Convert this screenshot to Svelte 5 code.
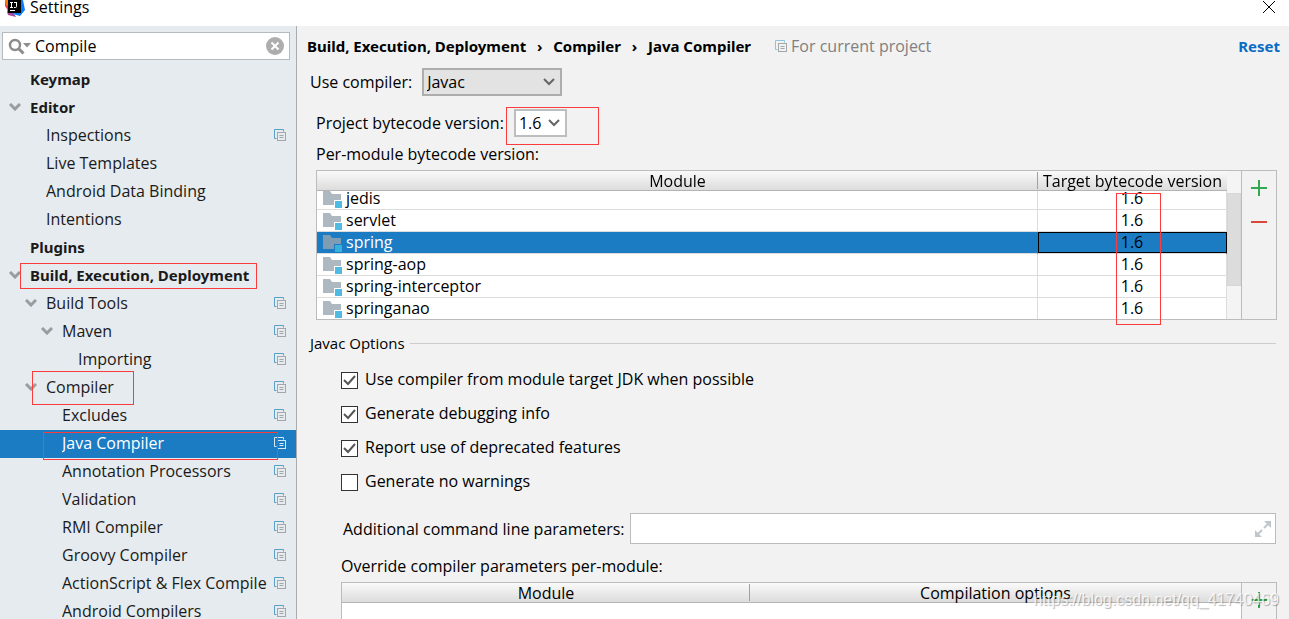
<script lang="ts">
  import { onMount } from 'svelte';

  type TreeItem = {
    label: string;
    level: number;
    bold?: boolean;
    open?: boolean;
    project?: boolean;
    mark?: string;
  };

  const tree: TreeItem[] = [
    { label: 'Keymap', level: 0, bold: true },
    { label: 'Editor', level: 0, bold: true, open: true },
    { label: 'Inspections', level: 1, project: true },
    { label: 'Live Templates', level: 1 },
    { label: 'Android Data Binding', level: 1 },
    { label: 'Intentions', level: 1 },
    { label: 'Plugins', level: 0, bold: true },
    { label: 'Build, Execution, Deployment', level: 0, bold: true, open: true, mark: 'build' },
    { label: 'Build Tools', level: 1, open: true, project: true },
    { label: 'Maven', level: 2, open: true, project: true },
    { label: 'Importing', level: 3, project: true },
    { label: 'Compiler', level: 1, open: true, project: true, mark: 'compiler' },
    { label: 'Excludes', level: 2, project: true },
    { label: 'Java Compiler', level: 2, project: true, mark: 'java' },
    { label: 'Annotation Processors', level: 2, project: true },
    { label: 'Validation', level: 2, project: true },
    { label: 'RMI Compiler', level: 2, project: true },
    { label: 'Groovy Compiler', level: 2, project: true },
    { label: 'ActionScript & Flex Compile', level: 2, project: true },
    { label: 'Android Compilers', level: 2, project: true },
  ];

  const modules = ['jedis', 'servlet', 'spring', 'spring-aop', 'spring-interceptor', 'springanao'];

  let options = $state([
    { label: 'Use compiler from module target JDK when possible', checked: true },
    { label: 'Generate debugging info', checked: true },
    { label: 'Report use of deprecated features', checked: true },
    { label: 'Generate no warnings', checked: false },
  ]);

  let query = $state('Compile');
  let selectedPage = $state('Java Compiler');
  let selectedModule = $state('spring');
  let compiler = $state('Javac');
  let projectVersion = $state('1.6');
  let parameters = $state('');
  let moduleList: HTMLDivElement;

  onMount(() => {
    moduleList.scrollTop = 3;
  });
</script>

{#snippet projectIcon()}
  <svg class="project-icon" width="12" height="12" viewBox="0 0 12 12" fill="none" aria-hidden="true">
    <path class="back" d="M2.500 9.500h-2v-9h9v2" />
    <rect class="front" x="3.500" y="3.500" width="8" height="8" />
    <path class="front" d="M5.500 6.500h4M5.500 8.500h4" />
  </svg>
{/snippet}

{#snippet chevron()}
  <svg class="chevron" width="12" height="8" viewBox="0 0 12 8" fill="none" aria-hidden="true">
    <path d="M1 1l5 5 5-5" />
  </svg>
{/snippet}

{#snippet plus()}
  <svg width="16" height="16" viewBox="0 0 16 16" aria-hidden="true">
    <path d="M8 0v16M0 8h16" stroke="#33a852" stroke-width="2" />
  </svg>
{/snippet}

<div class="dialog">
  <header class="titlebar">
    <svg class="logo" width="20" height="17" viewBox="0 0 20 17" aria-hidden="true">
      <path d="M0 0h9v12H4L0 6z" fill="#fe315d" />
      <path d="M0 0h3v5L1 6z" fill="#f97a12" />
      <path d="M3 8l5 4 3 5-8-2-1-3z" fill="#a04a9e" />
      <path d="M14 0h4l2 10-5 6-7-2 6-4z" fill="#087cfa" />
      <rect x="3" y="0" width="13" height="13" fill="#000" />
      <path d="M5 2.500h3M6.500 2.500v5M5 7.500h3M9 2.500h3M11.500 2.500v4q0 1-1 1H9M5 10.500h5" stroke="#fff" fill="none" />
    </svg>
    <h1>Settings</h1>
    <button class="close" aria-label="Close">
      <svg width="12" height="12" viewBox="0 0 12 12" aria-hidden="true">
        <path d="M0 0l12 12M12 0L0 12" stroke="#000" />
      </svg>
    </button>
  </header>

  <div class="content">
    <aside>
      <div class="search">
        <svg width="23" height="17" viewBox="0 0 23 17" aria-hidden="true">
          <circle cx="7" cy="7" r="5" fill="none" stroke="#8c8c8c" stroke-width="2.500" />
          <path d="M10.500 10.500l5 5" stroke="#8c8c8c" stroke-width="3" />
          <path d="M15 5h8l-4 4.500z" fill="#8c8c8c" />
        </svg>
        <input type="text" aria-label="Search settings" bind:value={query} />
        <button aria-label="Clear search" onclick={() => (query = '')}>
          <svg width="18" height="18" viewBox="0 0 18 18" aria-hidden="true">
            <circle cx="9" cy="9" r="9" fill="#adadad" />
            <path d="M5.500 5.500l7 7M12.500 5.500l-7 7" stroke="#fff" stroke-width="2" />
          </svg>
        </button>
      </div>

      <nav>
        {#each tree as item}
          <button
            class="tree-row level-{item.level}"
            class:bold={item.bold}
            class:selected={selectedPage === item.label}
            onclick={() => (selectedPage = item.label)}
          >
            <span class="arrow">
              {#if item.open}{@render chevron()}{/if}
            </span>
            <span class="tree-label">{item.label}</span>
            {#if item.project}{@render projectIcon()}{/if}
            {#if item.mark}<span class="mark mark-{item.mark}"></span>{/if}
          </button>
        {/each}
      </nav>
    </aside>

    <main>
      <div class="breadcrumbs">
        <span>Build, Execution, Deployment</span>
        <span class="sep">›</span>
        <span>Compiler</span>
        <span class="sep">›</span>
        <span>Java Compiler</span>
        <span class="scope">{@render projectIcon()}For current project</span>
        <a href="#reset">Reset</a>
      </div>

      <div class="field">
        <label for="compiler">Use compiler:</label>
        <div class="select gray">
          <select id="compiler" bind:value={compiler}>
            <option>Javac</option>
            <option>Eclipse</option>
            <option>Ajc</option>
          </select>
          {@render chevron()}
        </div>
      </div>

      <div class="field project-field">
        <label for="version">Project bytecode version:</label>
        <div class="select">
          <select id="version" bind:value={projectVersion}>
            <option>1.6</option>
            <option>1.7</option>
            <option>1.8</option>
          </select>
          {@render chevron()}
          <span class="mark mark-version"></span>
        </div>
      </div>

      <p class="table-title">Per-module bytecode version:</p>
      <div class="panel modules">
        <div class="list" bind:this={moduleList}>
          <table>
            <thead>
              <tr><th>Module</th><th class="target">Target bytecode version</th></tr>
            </thead>
            <tbody>
              {#each modules as name}
                <tr class:selected={selectedModule === name} onclick={() => (selectedModule = name)}>
                  <td>
                    <div class="module">
                      <svg width="20" height="18" viewBox="0 0 20 18" aria-hidden="true">
                        <path class="folder" d="M0 1h7l2 3h9v6h-7v5H0z" />
                        <rect class="badge" x="12" y="11" width="7" height="7" />
                      </svg>
                      <span>{name}</span>
                    </div>
                  </td>
                  <td class="version">1.6</td>
                </tr>
              {/each}
            </tbody>
          </table>
        </div>
        <div class="scrollbar"><div class="thumb"></div></div>
        <div class="tools">
          <button aria-label="Add module">{@render plus()}</button>
          <button aria-label="Remove module">
            <svg width="16" height="16" viewBox="0 0 16 16" aria-hidden="true">
              <path d="M0 8h16" stroke="#d6493b" stroke-width="2" />
            </svg>
          </button>
        </div>
        <span class="mark mark-targets"></span>
      </div>

      <h2>Javac Options</h2>
      <div class="options">
        {#each options as option}
          <label class="check">
            <input type="checkbox" bind:checked={option.checked} />
            <svg width="13" height="11" viewBox="0 0 13 11" fill="none" aria-hidden="true">
              <path d="M1 5l4 4 7-8" />
            </svg>
            <span>{option.label}</span>
          </label>
        {/each}

        <div class="params">
          <label for="params">Additional command line parameters:</label>
          <div class="expand-field">
            <input id="params" type="text" bind:value={parameters} />
            <button aria-label="Expand">
              <svg width="16" height="16" viewBox="0 0 16 16" aria-hidden="true">
                <path d="M9 0h7v7zM0 9v7h7z" fill="#c0c7cc" />
                <path d="M13 3L9 7M3 13l4-4" stroke="#c0c7cc" stroke-width="2" />
              </svg>
            </button>
          </div>
        </div>

        <p class="override-title">Override compiler parameters per-module:</p>
        <div class="panel overrides">
          <div class="list">
            <table>
              <thead>
                <tr><th class="override-module">Module</th><th>Compilation options</th></tr>
              </thead>
            </table>
          </div>
          <div class="tools">
            <button aria-label="Add override">{@render plus()}</button>
          </div>
        </div>
      </div>
    </main>
  </div>

  <span class="watermark">https://blog.csdn.net/qq_41740469</span>
</div>

<style>
  :global(body) {
    margin: 0;
  }

  .dialog {
    position: relative;
    display: flex;
    flex-direction: column;
    height: 100vh;
    overflow: hidden;
    background: #f2f2f2;
    color: #000;
    font-family: 'Open Sans', 'Noto Sans', sans-serif;
    font-size: 16px;
    line-height: 20px;
  }

  .dialog * {
    box-sizing: border-box;
  }

  button,
  input,
  select {
    margin: 0;
    padding: 0;
    border: 0;
    background: none;
    color: inherit;
    font: inherit;
    outline: none;
  }

  svg {
    display: block;
    flex: none;
  }

  /* title bar */
  .titlebar {
    display: flex;
    flex: none;
    align-items: flex-start;
    height: 26px;
    padding: 0 14px 0 5px;
    background: #fff;
  }

  h1 {
    flex: 1;
    margin: 0 0 0 5px;
    font-size: 16px;
    font-weight: 400;
    line-height: 15px;
  }

  .close {
    padding-top: 1px;
  }

  .content {
    display: flex;
    flex: 1;
    min-height: 0;
  }

  /* sidebar */
  aside {
    flex: none;
    width: 297px;
    border-right: 1px solid #acacac;
    background: #e6ebef;
    overflow: hidden;
  }

  .search {
    display: flex;
    align-items: center;
    height: 28px;
    margin: 6px 6px 6px 2px;
    padding: 0 5px;
    border: 1px solid #b5babf;
    background: #fff;
  }

  .search input {
    flex: 1;
    min-width: 0;
    padding-left: 4px;
  }

  .tree-row {
    position: relative;
    display: flex;
    align-items: center;
    width: 100%;
    height: 28px;
    padding: 0 10px 2px 9px;
    color: #1a1a1a;
    text-align: left;
    white-space: nowrap;
  }

  .level-1 {
    padding-left: 25px;
  }

  .level-2 {
    padding-left: 41px;
  }

  .level-3 {
    padding-left: 57px;
  }

  .bold,
  .breadcrumbs {
    font-family: 'Noto Sans', 'Open Sans', sans-serif;
    font-size: 15px;
    font-weight: 700;
  }

  .tree-row.selected {
    background: #1b7cc4;
    color: #fff;
  }

  .arrow {
    flex: none;
    width: 21px;
  }

  .tree-label {
    flex: 1;
    min-width: 0;
    overflow: hidden;
    margin-right: 4px;
  }

  .chevron {
    stroke: #666;
    stroke-width: 2;
  }

  .arrow .chevron {
    stroke: #999da0;
    stroke-width: 3;
  }

  .project-icon .back {
    stroke: #5b9fc6;
  }

  .project-icon .front {
    stroke: #a3a7aa;
  }

  .selected .project-icon path,
  .selected .project-icon rect {
    stroke: #d5e8f5;
  }

  /* red highlight frames lie over the controls */
  .mark {
    position: absolute;
    border: 1px solid #fa3c3c;
    pointer-events: none;
    z-index: 2;
  }

  .mark-build {
    left: 20px;
    top: 1px;
    width: 237px;
    height: 26px;
  }

  .mark-compiler {
    left: 32px;
    top: -3px;
    width: 102px;
    height: 34px;
  }

  .mark-java {
    left: 43px;
    top: 2px;
    width: 235px;
    height: 28px;
  }

  .mark-version {
    left: -10px;
    top: -4px;
    width: 93px;
    height: 38px;
  }

  .mark-targets {
    right: 115px;
    top: 22px;
    width: 45px;
    height: 132px;
  }

  /* settings page */
  main {
    flex: 1;
    min-width: 0;
    padding: 10px 13px 0 13px;
    overflow: hidden;
  }

  .breadcrumbs {
    display: flex;
    align-items: center;
    margin: 0 -4px 0 -3px;
    white-space: nowrap;
  }

  .sep {
    width: 27px;
    text-align: center;
  }

  .scope {
    display: flex;
    flex: 1;
    align-items: center;
    gap: 4px;
    margin-left: 24px;
    color: #808080;
    font-family: 'Open Sans', 'Noto Sans', sans-serif;
    font-size: 16px;
    font-weight: 400;
  }

  .scope .project-icon .back {
    stroke: #8cc4e0;
  }

  .breadcrumbs a {
    color: #0a6cc4;
    text-decoration: none;
  }

  .field {
    display: flex;
    align-items: center;
    gap: 10px;
    height: 28px;
    margin-top: 12px;
  }

  .project-field {
    margin: 13px 0 0 6px;
  }

  .select {
    position: relative;
    display: flex;
    align-items: center;
    width: 53px;
    height: 28px;
    border: 2px solid #bebebe;
    background: #fff;
  }

  .select.gray {
    width: 140px;
    border-color: #adadad;
    background: #e3e3e3;
  }

  .select select {
    width: 100%;
    height: 100%;
    padding-left: 3px;
    appearance: none;
  }

  .select .chevron {
    position: absolute;
    right: 5px;
    top: 8px;
    pointer-events: none;
  }

  p {
    margin: 0;
  }

  .table-title {
    margin: 7px 0 6px 6px;
  }

  .panel {
    position: relative;
    display: flex;
    margin-right: -1px;
    border: 1px solid #bcbcbc;
  }

  .modules {
    height: 150px;
    margin-left: 6px;
  }

  .list {
    flex: 1;
    min-width: 0;
    overflow: hidden;
    background: #fff;
  }

  table {
    width: 100%;
    border-collapse: separate;
    border-spacing: 0;
    table-layout: fixed;
  }

  th {
    position: sticky;
    top: 0;
    height: 20px;
    padding: 1px 0 0;
    border-bottom: 1px solid #b4b4b4;
    background: linear-gradient(#fafafa, #dcdcdc);
    font-weight: 400;
    line-height: 18px;
    z-index: 1;
  }

  th + th::before {
    content: '';
    position: absolute;
    left: -1px;
    top: 1px;
    bottom: 1px;
    border-left: 1px solid #a0a0a0;
  }

  .target {
    width: 189px;
  }

  td {
    height: 22px;
    padding: 0 0 1px;
    border-right: 1px solid #dcdcdc;
    border-bottom: 1px solid #dcdcdc;
    line-height: 20px;
  }

  .module {
    display: flex;
    align-items: flex-start;
    gap: 3px;
    height: 20px;
    padding-left: 6px;
  }

  .module svg {
    margin-top: 2px;
  }

  .folder {
    fill: #adb8c0;
  }

  .badge {
    fill: #50bbe2;
  }

  tr.selected td {
    border-right-color: #1b7cc4;
    background: #1b7cc4;
    color: #fff;
  }

  .selected .folder {
    fill: #7e9db5;
  }

  .selected .badge {
    fill: #38b0de;
  }

  .version {
    text-align: center;
  }

  tr.selected .version {
    border-right-color: #000;
    color: #000;
    box-shadow: inset 1px 1px #000, inset 0 -1px #000;
  }

  .scrollbar {
    flex: none;
    width: 14px;
    padding-top: 22px;
    background: #f4f4f4;
  }

  .thumb {
    height: 93px;
    border: 1px solid #d6d6d6;
    background: #dcdcdc;
  }

  .tools {
    display: flex;
    flex: none;
    flex-direction: column;
    align-items: center;
    gap: 18px;
    width: 35px;
    padding-top: 9px;
    border-left: 1px solid #bcbcbc;
  }

  h2 {
    display: flex;
    align-items: center;
    gap: 5px;
    margin: 13px 0 0;
    font-size: 15px;
    font-weight: 400;
  }

  h2::after {
    content: '';
    flex: 1;
    border-top: 1px solid #cdcdcd;
  }

  .options {
    padding: 10px 0 0 31px;
  }

  .check {
    position: relative;
    display: flex;
    align-items: center;
    gap: 7px;
    width: fit-content;
    height: 34px;
  }

  .check input {
    width: 17px;
    height: 17px;
    border: 1px solid #333;
    background: #fff;
    appearance: none;
  }

  .check span {
    padding-bottom: 2px;
  }

  /* tick drawn over the box */
  .check svg {
    position: absolute;
    left: 2px;
    top: 12px;
    stroke: #555;
    stroke-width: 2;
    visibility: hidden;
    pointer-events: none;
  }

  .check input:checked + svg {
    visibility: visible;
  }

  .params {
    display: flex;
    align-items: center;
    gap: 5px;
    margin-top: 14px;
    padding-left: 2px;
  }

  .expand-field {
    display: flex;
    flex: 1;
    align-items: center;
    height: 31px;
    padding: 0 4px;
    border: 1px solid #bcbcbc;
    background: #fff;
  }

  .expand-field input {
    flex: 1;
  }

  .override-title {
    margin: 12px 0 6px;
  }

  .overrides {
    height: 120px;
  }

  .override-module {
    width: 408px;
  }

  .watermark {
    position: absolute;
    right: 10px;
    bottom: 9px;
    color: rgba(255, 255, 255, 0.8);
    font-family: 'Liberation Sans', sans-serif;
    font-size: 16px;
    text-shadow: 1px 1px 1px rgba(0, 0, 0, 0.3);
    z-index: 3;
    pointer-events: none;
  }
</style>
